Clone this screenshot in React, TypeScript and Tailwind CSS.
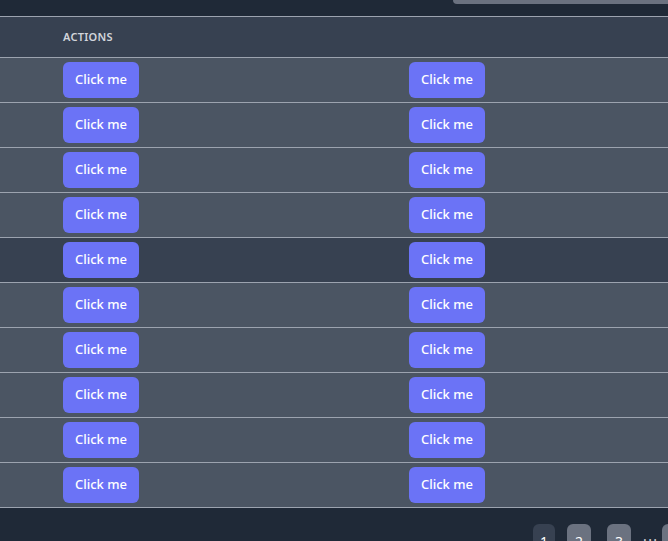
import React from 'react'

const rows = Array.from({ length: 10 }, (_, i) => i)

function ActionButton() {
  return (
    <button className="h-9 w-[76px] rounded-md bg-[#6b73f6] text-[13px] font-medium text-white">
      Click me
    </button>
  )
}

export default function App() {
  return (
    <div
      className="h-[541px] w-[668px] overflow-hidden bg-[#1f2937]"
      style={{ fontFamily: '"Noto Sans", "Open Sans", sans-serif' }}
    >
      {/* top strip */}
      <div className="flex h-4 justify-end">
        <div className="h-1 w-[215px] rounded-bl-md bg-[#6b7280]" />
      </div>

      {/* table */}
      <div className="border-t border-[#9ca3af]">
        <div className="grid h-10 grid-cols-[409px_1fr] items-center bg-[#374151]">
          <div className="pl-[63px] text-[11px] font-semibold uppercase tracking-wide text-[#d1d5db]">
            Actions
          </div>
          <div />
        </div>
        {rows.map((i) => (
          <div
            key={i}
            className={`grid h-[45px] grid-cols-[409px_1fr] items-center border-t border-[#9ca3af] ${
              i === 4 ? 'bg-[#374151]' : 'bg-[#4b5563]'
            }`}
          >
            <div className="pl-[63px]">
              <ActionButton />
            </div>
            <div>
              <ActionButton />
            </div>
          </div>
        ))}
        <div className="border-t border-[#9ca3af]" />
      </div>

      {/* pagination */}
      <div className="flex items-start pl-[533px] pt-4">
        <button className="h-8 w-[22px] shrink-0 rounded-md bg-[#374151] pt-1 text-sm text-white">1</button>
        <button className="ml-3 h-8 w-6 shrink-0 rounded-md bg-[#6b7280] pt-1 text-sm text-white">2</button>
        <button className="ml-4 h-8 w-6 shrink-0 rounded-md bg-[#6b7280] pt-1 text-sm text-white">3</button>
        <span className="ml-3 shrink-0 pt-1 text-sm leading-4 tracking-widest text-[#d1d5db]">...</span>
        <button className="ml-1 h-8 w-6 shrink-0 rounded-md bg-[#6b7280] text-sm text-white">4</button>
      </div>
    </div>
  )
}
